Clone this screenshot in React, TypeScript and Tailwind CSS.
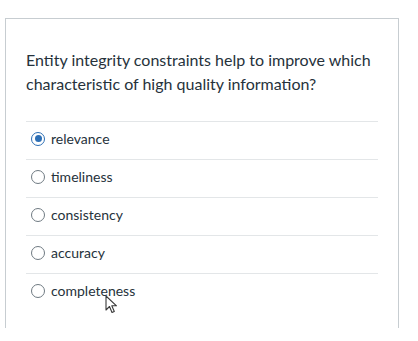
import React from "react";

const options = ["relevance", "timeliness", "consistency", "accuracy", "completeness"];

function Radio({ checked }: { checked: boolean }) {
  return checked ? (
    <span className="flex h-[14px] w-[14px] items-center justify-center rounded-full border-[1.5px] border-[#2d6fb5]">
      <span className="h-[7px] w-[7px] rounded-full bg-[#2d6fb5]" />
    </span>
  ) : (
    <span className="h-[14px] w-[14px] rounded-full border-[1.5px] border-[#6f7a82]" />
  );
}

export default function App() {
  return (
    <div className="h-[341px] w-[418px] bg-white font-['Lato','Noto_Sans',sans-serif] text-[#2d3b45]">
      <div className="pl-[5px] pt-[18px]">
        <div className="relative h-[310px] w-[394px] border-x border-t border-[#c7cdd1] px-[20px] pt-[29px]">
          <p className="text-[16px] leading-[24px] text-[#26323b]">
            Entity integrity constraints help to improve which characteristic of high quality information?
          </p>
          <ul className="mt-[25px] w-[352px]">
            {options.map((o, i) => (
              <li
                key={o}
                className="flex h-[38px] items-center gap-[6px] border-t border-[#e3e6e8] pb-[4px] pl-[5px] text-[14px] text-[#26323b]"
              >
                <Radio checked={i === 0} />
                <span>{o}</span>
              </li>
            ))}
          </ul>
          <svg
            className="absolute left-[99px] top-[276px]"
            width="14"
            height="20"
            viewBox="0 0 14 20"
          >
            <path
              d="M1 1 L1 15 L4.5 11.5 L7 17.5 L9.3 16.5 L6.8 10.8 L11.5 10.8 Z"
              fill="white"
              stroke="#3a3a3a"
              strokeWidth="1.1"
              strokeLinejoin="round"
            />
          </svg>
        </div>
      </div>
    </div>
  );
}
